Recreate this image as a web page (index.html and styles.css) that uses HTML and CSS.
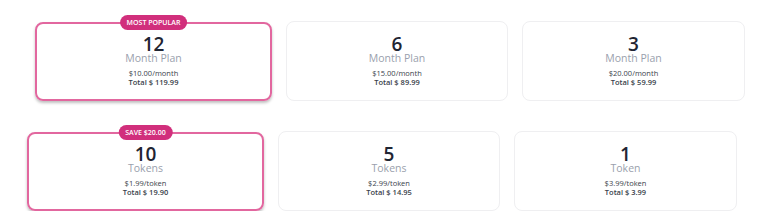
FILE: index.html
```html
<!DOCTYPE html>
<html lang="en">
<head>
    <meta charset="UTF-8">
    <meta name="viewport" content="width=device-width, initial-scale=1.0">
    <title>Plans</title>
    <link rel="stylesheet" href="styles.css">
</head>
<body>
<div class="plans plans-months">
    <div class="card selected">
        <span class="badge">MOST POPULAR</span>
        <div class="qty">12</div>
        <div class="unit">Month Plan</div>
        <div class="price">$10.00/month</div>
        <div class="total">Total $ 119.99</div>
    </div>
    <div class="card">
        <div class="qty">6</div>
        <div class="unit">Month Plan</div>
        <div class="price">$15.00/month</div>
        <div class="total">Total $ 89.99</div>
    </div>
    <div class="card">
        <div class="qty">3</div>
        <div class="unit">Month Plan</div>
        <div class="price">$20.00/month</div>
        <div class="total">Total $ 59.99</div>
    </div>
</div>

<div class="plans plans-tokens">
    <div class="card selected">
        <span class="badge">SAVE $20.00</span>
        <div class="qty">10</div>
        <div class="unit">Tokens</div>
        <div class="price">$1.99/token</div>
        <div class="total">Total $ 19.90</div>
    </div>
    <div class="card">
        <div class="qty">5</div>
        <div class="unit">Tokens</div>
        <div class="price">$2.99/token</div>
        <div class="total">Total $ 14.95</div>
    </div>
    <div class="card">
        <div class="qty">1</div>
        <div class="unit">Token</div>
        <div class="price">$3.99/token</div>
        <div class="total">Total $ 3.99</div>
    </div>
</div>
</body>
</html>
```

FILE: styles.css
```css
body {
    margin: 0;
    background: #ffffff;
    font-family: "Open Sans", "Liberation Sans", sans-serif;
    color: #1f2533;
}

.plans {
    display: grid;
    grid-template-columns: 237px 222px 223px;
    column-gap: 14px;
    height: 80px;
}

.plans-months {
    margin: 21px 0 0 35px;
}

.plans-tokens {
    margin: 30px 0 0 27px;
}

.card {
    position: relative;
    box-sizing: border-box;
    border: 1px solid #efeff1;
    border-radius: 8px;
    display: flex;
    flex-direction: column;
    align-items: center;
    text-align: center;
    padding-top: 14px;
}

.card.selected {
    border: 2px solid #e2679f;
    height: 79px;
    margin-top: 1px;
    padding-top: 12px;
    box-shadow: 0 2px 3px rgba(0, 0, 0, 0.25);
}

.badge {
    position: absolute;
    top: -9px;
    left: 50%;
    transform: translateX(-50%);
    background: #d12f7c;
    color: #ffffff;
    font-size: 7px;
    font-weight: 600;
    line-height: 15px;
    padding: 0 7px;
    border-radius: 8px;
    white-space: nowrap;
}

.qty {
    font-size: 19px;
    font-weight: 600;
    line-height: 17px;
    color: #1f2533;
}

.unit {
    font-size: 10.5px;
    line-height: 11px;
    color: #9a9fad;
}

.price {
    margin-top: 5px;
    font-size: 7.5px;
    line-height: 9px;
    color: #3a3f4b;
}

.total {
    font-size: 7.5px;
    line-height: 9px;
    font-weight: 600;
    color: #3a3f4b;
}
```
